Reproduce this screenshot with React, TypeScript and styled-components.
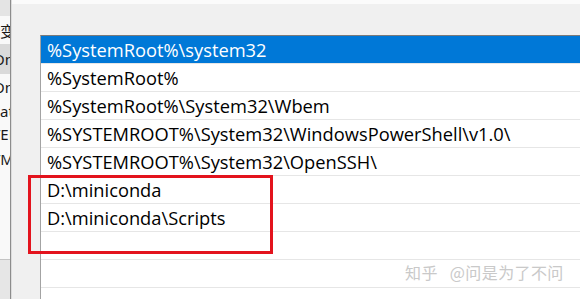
import React from "react";
import styled, { createGlobalStyle } from "styled-components";

const GlobalStyle = createGlobalStyle`
  html, body { margin: 0; padding: 0; background: #f0f0f0; }
  body { font-family: "Open Sans", "Noto Sans", "Noto Sans CJK SC", sans-serif; }
`;

const Screen = styled.div`
  position: relative;
  width: 580px;
  height: 299px;
  overflow: hidden;
  display: flex;
  background: #f0f0f0;
`;

const BackWindow = styled.div`
  width: 10px;
  flex: none;
  display: flex;
  flex-direction: column;
  background: #f9f9f9;
  overflow: hidden;
  font-family: "Noto Sans", "Noto Sans CJK SC", sans-serif;
  font-size: 15px;
  color: #1a1a1a;
`;

const BackTop = styled.div`
  height: 16px;
  background: #e4e4e4;
`;

const BackLine = styled.div<{ $shift: number; $h: number; $sel?: boolean }>`
  height: ${(p) => p.$h}px;
  display: flex;
  align-items: center;
  white-space: nowrap;
  background: ${(p) => (p.$sel ? "#dadada" : "transparent")};
  & > span {
    margin-left: ${(p) => p.$shift}px;
  }
`;

const BackFill = styled.div`
  flex: 1;
`;

const BackFooter = styled.div`
  height: 39px;
  background: #e6e6e6;
  border-top: 1px solid #c4c4c4;
`;

const Divider = styled.div`
  width: 2px;
  flex: none;
  background: linear-gradient(to right, #8c8c8c 50%, #dcdcdc 50%);
`;

const Dialog = styled.div`
  flex: 1;
  display: flex;
  flex-direction: column;
  border-top: 4px solid #fbfbfb;
  padding: 31px 0 0 28px;
  background: #f0f0f0;
  min-width: 0;
`;

const PathList = styled.div`
  margin-right: -20px;
  background: #ffffff;
  border-top: 1px solid #7a7a7a;
  border-left: 1px solid #a3a3a3;
  display: flex;
  flex-direction: column;
`;

const Row = styled.div<{ $selected?: boolean }>`
  height: 28px;
  box-sizing: border-box;
  flex: none;
  display: flex;
  align-items: center;
  padding-left: 6px;
  border-bottom: 1px solid #e6e6e6;
  background: ${(p) => (p.$selected ? "#0078d7" : "#ffffff")};
  color: ${(p) => (p.$selected ? "#ffffff" : "#000000")};
  font-size: 18.3px;
  white-space: nowrap;
`;

const Highlight = styled.div`
  position: absolute;
  left: 28px;
  top: 175px;
  width: 245px;
  height: 79px;
  box-sizing: border-box;
  border: 3.5px solid #e3131d;
  pointer-events: none;
`;

const Watermark = styled.div`
  position: absolute;
  left: 405px;
  top: 260px;
  font-family: "Noto Sans CJK SC", "Noto Sans", sans-serif;
  font-size: 16px;
  color: #c9c9c9;
  letter-spacing: 0.4px;
  text-shadow: 0 0 1px #ffffff, 0 0 1px #ffffff;
  white-space: nowrap;
  & > span { margin-right: 12px; }
`;

const paths = [
  "%SystemRoot%\\system32",
  "%SystemRoot%",
  "%SystemRoot%\\System32\\Wbem",
  "%SYSTEMROOT%\\System32\\WindowsPowerShell\\v1.0\\",
  "%SYSTEMROOT%\\System32\\OpenSSH\\",
  "D:\\miniconda",
  "D:\\miniconda\\Scripts",
  "",
  "",
  "",
];

const backItems = [
  { text: "用户变量", shift: -30, h: 28 },
  { text: "OneDrive", shift: -7, h: 30, sel: true },
  { text: "OneDriveConsumer", shift: -7, h: 25 },
  { text: "Path", shift: -9, h: 23 },
  { text: "TEMP", shift: -8, h: 23 },
  { text: "TMP", shift: -8, h: 27 },
];

export default function App() {
  return (
    <>
      <GlobalStyle />
      <Screen>
        <BackWindow>
          <BackTop />
          {backItems.map((b) => (
            <BackLine key={b.text} $shift={b.shift} $h={b.h} $sel={b.sel}>
              <span>{b.text}</span>
            </BackLine>
          ))}
          <BackFill />
          <BackFooter />
        </BackWindow>
        <Divider />
        <Dialog>
          <PathList>
            {paths.map((p, i) => (
              <Row key={i} $selected={i === 0}>
                {p}
              </Row>
            ))}
          </PathList>
        </Dialog>
        <Highlight />
        <Watermark>
          <span>知乎</span>@问是为了不问
        </Watermark>
      </Screen>
    </>
  );
}
